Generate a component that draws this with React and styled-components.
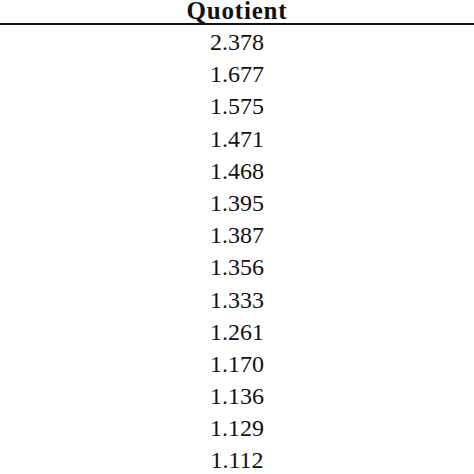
import React from 'react';
import styled, { createGlobalStyle } from 'styled-components';

const Global = createGlobalStyle`
  html, body {
    margin: 0;
    padding: 0;
    background: #fff;
  }
`;

const Table = styled.div`
  width: 474px;
  height: 474px;
  overflow: hidden;
  font-family: "Liberation Serif", "Times New Roman", serif;
  color: #111;
  display: flex;
  flex-direction: column;
`;

const Head = styled.div`
  font-weight: bold;
  font-size: 25px;
  line-height: 22px;
  text-align: center;
  letter-spacing: 0.8px;
  padding-bottom: 1px;
  border-bottom: 2px solid #111;
`;

const Body = styled.div`
  padding-top: 1px;
`;

const Row = styled.div`
  font-size: 24px;
  line-height: 32.2px;
  height: 32.2px;
  text-align: center;
`;

const values = [
  '2.378', '1.677', '1.575', '1.471', '1.468', '1.395', '1.387',
  '1.356', '1.333', '1.261', '1.170', '1.136', '1.129', '1.112',
];

function App() {
  return (
    <>
      <Global />
      <Table>
        <Head>Quotient</Head>
        <Body>
          {values.map((v) => (
            <Row key={v}>{v}</Row>
          ))}
        </Body>
      </Table>
    </>
  );
}

export default App;
